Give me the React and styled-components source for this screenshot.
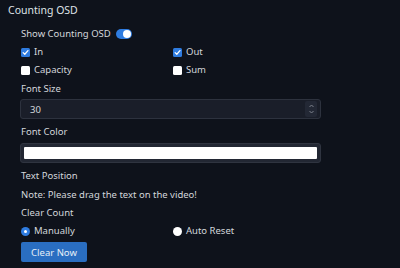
import React from "react";
import styled, { createGlobalStyle } from "styled-components";

const Global = createGlobalStyle`
  html, body { margin: 0; padding: 0; background: #0e121b; }
  body { font-family: "Noto Sans", "Open Sans", sans-serif; color: #d4d7dc; }
  * { box-sizing: border-box; }
`;

const Panel = styled.div`
  width: 400px;
  height: 268px;
  background: #0e121b;
  padding-top: 2px;
  overflow: hidden;
`;

const Title = styled.div`
  font-size: 10.5px;
  line-height: 16px;
  height: 16px;
  padding-left: 8px;
  color: #dfe2e7;
`;

const Body = styled.div`
  padding: 9px 0 0 21px;
  display: flex;
  flex-direction: column;
`;

const Row = styled.div`
  display: flex;
  align-items: center;
  height: 14px;
  gap: 5px;
`;

const Grid = styled.div`
  display: grid;
  grid-template-columns: 152px 1fr;
  row-gap: 4px;
  margin-top: 4px;
`;

const Label = styled.span`
  font-size: 9.5px;
  line-height: 14px;
  color: #d4d7dc;
`;

const Toggle = styled.span`
  width: 16px;
  height: 10px;
  border-radius: 5px;
  background: #2f7ce0;
  position: relative;
  &::after {
    content: "";
    position: absolute;
    right: 1px;
    top: 1px;
    width: 8px;
    height: 8px;
    border-radius: 50%;
    background: #fff;
  }
`;

const Check = styled.span`
  width: 9px;
  height: 9px;
  border-radius: 1.5px;
  background: ${(p) => (p.$on ? "#2f7ce0" : "#ffffff")};
  display: inline-flex;
  align-items: center;
  justify-content: center;
  flex: none;
`;

const CheckItem = styled.label`
  display: flex;
  align-items: center;
  gap: 4px;
  height: 14px;
`;

const FieldLabel = styled.div`
  font-size: 9.5px;
  line-height: 14px;
  height: 14px;
  margin-top: ${(p) => p.$mt || 0}px;
`;

const NumberBox = styled.div`
  width: 301px;
  height: 20px;
  margin-left: -1px;
  margin-top: 3px;
  border: 1px solid #2d323e;
  border-radius: 3px;
  background: #1a1e29;
  display: flex;
  align-items: center;
  justify-content: space-between;
  padding: 0 3px 0 9px;
  font-size: 9.5px;
`;

const SpinBox = styled.span`
  width: 12px;
  height: 16px;
  border-radius: 2px;
  background: #232835;
  display: flex;
  align-items: center;
  justify-content: center;
`;

const ColorBox = styled.div`
  width: 301px;
  height: 20px;
  margin-left: -1px;
  margin-top: 4px;
  border: 1px solid #2f3440;
  border-radius: 3px;
  background: #222733;
  padding: 3px;
  display: flex;
`;

const Swatch = styled.div`
  flex: 1;
  background: #ffffff;
  border-radius: 1px;
`;

const Radio = styled.span`
  width: 9px;
  height: 9px;
  border-radius: 50%;
  background: ${(p) => (p.$on ? "#2f7ce0" : "#ffffff")};
  display: inline-flex;
  align-items: center;
  justify-content: center;
  flex: none;
  &::after {
    content: "";
    width: 3px;
    height: 3px;
    border-radius: 50%;
    background: #fff;
    display: ${(p) => (p.$on ? "block" : "none")};
  }
`;

const Button = styled.button`
  margin-top: 4px;
  width: 66px;
  height: 20px;
  border: none;
  border-radius: 2px;
  background: #2a6ec1;
  color: #e6eef8;
  font-family: inherit;
  font-size: 9.5px;
  padding: 0;
  align-self: flex-start;
`;

const Tick = () => (
  <svg width="7" height="7" viewBox="0 0 8 8">
    <path d="M1.3 4.2 L3.2 6 L6.8 1.8" fill="none" stroke="#fff" strokeWidth="1.4" strokeLinecap="round" strokeLinejoin="round" />
  </svg>
);

const CheckBox = ({ on, children }) => (
  <CheckItem>
    <Check $on={on}>{on && <Tick />}</Check>
    <Label>{children}</Label>
  </CheckItem>
);

const RadioItem = ({ on, children }) => (
  <CheckItem>
    <Radio $on={on} />
    <Label>{children}</Label>
  </CheckItem>
);

export default function App() {
  return (
    <>
      <Global />
      <Panel>
        <Title>Counting OSD</Title>
        <Body>
          <Row>
            <Label>Show Counting OSD</Label>
            <Toggle />
          </Row>
          <Grid>
            <CheckBox on>In</CheckBox>
            <CheckBox on>Out</CheckBox>
            <CheckBox>Capacity</CheckBox>
            <CheckBox>Sum</CheckBox>
          </Grid>
          <FieldLabel $mt={5}>Font Size</FieldLabel>
          <NumberBox>
            <span>30</span>
            <SpinBox>
              <svg width="7" height="12" viewBox="0 0 7 12">
                <path d="M1.5 4 L3.5 2 L5.5 4" fill="none" stroke="#7d828d" strokeWidth="1" />
                <path d="M1.5 8 L3.5 10 L5.5 8" fill="none" stroke="#7d828d" strokeWidth="1" />
              </svg>
            </SpinBox>
          </NumberBox>
          <FieldLabel $mt={6}>Font Color</FieldLabel>
          <ColorBox>
            <Swatch />
          </ColorBox>
          <FieldLabel $mt={6}>Text Position</FieldLabel>
          <FieldLabel $mt={5}>Note: Please drag the text on the video!</FieldLabel>
          <FieldLabel $mt={4}>Clear Count</FieldLabel>
          <Grid>
            <RadioItem on>Manually</RadioItem>
            <RadioItem>Auto Reset</RadioItem>
          </Grid>
          <Button>Clear Now</Button>
        </Body>
      </Panel>
    </>
  );
}
